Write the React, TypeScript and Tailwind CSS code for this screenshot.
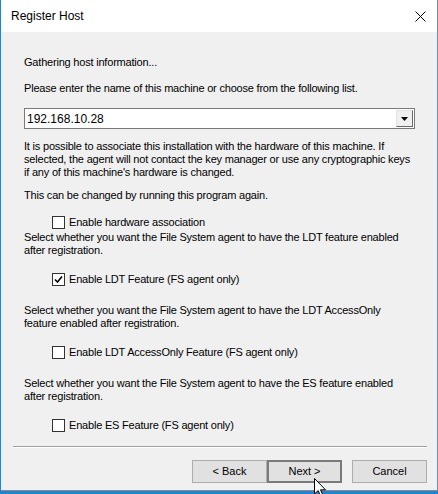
import React from "react";

const font = { fontFamily: '"Liberation Sans", Arial, sans-serif' };

function Check({ checked, label }: { checked?: boolean; label: string }) {
  return (
    <div className="flex items-center h-[13px] ml-[28px]">
      <div className="w-[13px] h-[13px] border border-[#333333] bg-white flex items-center justify-center shrink-0">
        {checked && (
          <svg width="9" height="9" viewBox="0 0 9 9">
            <path d="M1 4.5 L3.5 7 L8 1.5" fill="none" stroke="#000" strokeWidth="1.6" />
          </svg>
        )}
      </div>
      <span className="ml-[4px] text-[11px] leading-[13px] text-black whitespace-nowrap">{label}</span>
    </div>
  );
}

function Btn({ label, def }: { label: string; def?: boolean }) {
  return (
    <div
      className={`w-[75px] h-[23px] flex items-center justify-center text-[11px] text-black bg-[#e1e1e1] ${
        def ? "border-2 border-[#7a7a7a]" : "border border-[#adadad]"
      }`}
    >
      {label}
    </div>
  );
}

export default function App() {
  return (
    <div className="w-[438px] h-[494px] bg-[#1a86d6] relative overflow-hidden" style={font}>
      <div className="w-[437px] ml-[1px] h-[491px] bg-[#f0f0f0] border-r border-b border-[#6b8fb5] flex flex-col">
        {/* title bar */}
        <div className="h-[32px] bg-white flex items-center justify-between pl-[10px] pr-[11px] shrink-0">
          <span className="text-[12px] text-black">Register Host</span>
          <svg width="11" height="11" viewBox="0 0 11 11">
            <path d="M0.5 0.5 L10.5 10.5 M10.5 0.5 L0.5 10.5" stroke="#000" strokeWidth="1" />
          </svg>
        </div>
        {/* body */}
        <div className="flex flex-col pl-[12px] pr-[10px]">
          <div className="ml-[11px] flex flex-col text-[11px] leading-[13px] tracking-[-0.2px] text-black whitespace-nowrap">
            <div className="mt-[24px] h-[13px]">Gathering host information...</div>
            <div className="mt-[13px] h-[13px]">Please enter the name of this machine or choose from the following list.</div>
            <div className="mt-[13px] h-[21px] w-[391px] bg-white border border-[#7a7a7a] flex items-center justify-between pl-[2px] pr-[1px] tracking-normal">
              <span className="text-[12px] leading-[14px]">192.168.10.28</span>
              <div className="w-[17px] h-[17px] bg-[#f0f0f0] border-t border-l border-t-[#e3e3e3] border-l-[#e3e3e3] border-r border-b border-r-[#696969] border-b-[#696969] flex items-center justify-center">
                <svg width="7" height="4" viewBox="0 0 7 4">
                  <path d="M0 0 H7 L3.5 4 Z" fill="#000" />
                </svg>
              </div>
            </div>
            <div className="mt-[11px]">
              It is possible to associate this installation with the hardware of this machine. If
              <br />
              selected, the agent will not contact the key manager or use any cryptographic keys
              <br />
              if any of this machine's hardware is changed.
            </div>
            <div className="mt-[10px] h-[13px]">This can be changed by running this program again.</div>
            <div className="mt-[14px]">
              <Check label="Enable hardware association" />
            </div>
            <div className="mt-[2px]">
              Select whether you want the File System agent to have the LDT feature enabled
              <br />
              after registration.
            </div>
            <div className="mt-[16px]">
              <Check checked label="Enable LDT Feature (FS agent only)" />
            </div>
            <div className="mt-[18px]">
              Select whether you want the File System agent to have the LDT AccessOnly
              <br />
              feature enabled after registration.
            </div>
            <div className="mt-[16px]">
              <Check label="Enable LDT AccessOnly Feature (FS agent only)" />
            </div>
            <div className="mt-[18px]">
              Select whether you want the File System agent to have the ES feature enabled
              <br />
              after registration.
            </div>
            <div className="mt-[16px]">
              <Check label="Enable ES Feature (FS agent only)" />
            </div>
          </div>
          <div className="mt-[14px] h-[2px] border-t border-t-[#a0a0a0] border-b border-b-white" />
          <div className="mt-[12px] flex justify-end">
            <Btn label="< Back" />
            <Btn label="Next >" def />
            <div className="ml-[10px]">
              <Btn label="Cancel" />
            </div>
          </div>
        </div>
      </div>
      {/* mouse cursor */}
      <svg className="absolute left-[314px] top-[478px]" width="14" height="20" viewBox="0 0 14 20">
        <path d="M0.5 0.5 L0.5 16 L4.2 12.6 L6.8 18.5 L9 17.5 L6.5 11.8 L11.5 11.8 Z" fill="#fff" stroke="#000" strokeWidth="1" />
      </svg>
    </div>
  );
}
